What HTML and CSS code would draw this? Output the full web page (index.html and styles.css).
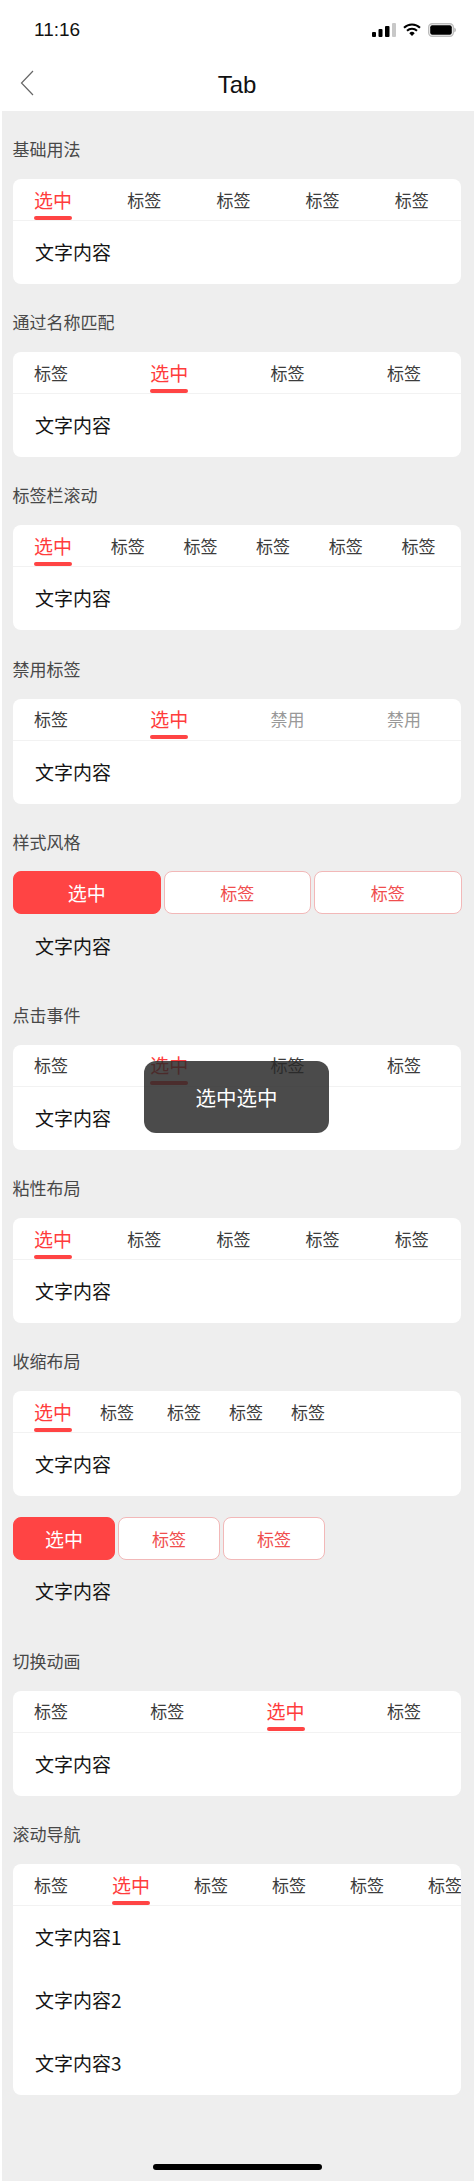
FILE: index.html
```html
<!DOCTYPE html>
<html lang="zh">
<head>
<meta charset="utf-8">
<title>Tab</title>
<link rel="stylesheet" href="styles.css">
</head>
<body>
<div class="page">
  <header class="top">
    <div class="status">
      <span class="time">11:16</span>
      <span class="status-icons">
        <svg class="signal" viewBox="0 0 24 14" width="24" height="14"><rect x="0" y="9" width="4" height="5" rx="1" fill="#000"/><rect x="6.500" y="6" width="4" height="8" rx="1" fill="#000"/><rect x="13" y="3" width="4.500" height="11" rx="1" fill="#000"/><rect x="20" y="0" width="4" height="14" rx="1" fill="#c8c8c8"/></svg>
        <svg class="wifi" viewBox="0 0 18 13" width="18" height="13"><path d="M1 4.700a11.500 11.500 0 0 1 16 0" fill="none" stroke="#000" stroke-width="2"/><path d="M4 7.800a7.200 7.200 0 0 1 10 0" fill="none" stroke="#000" stroke-width="2"/><path d="M9 13 6.300 10.200a3.800 3.800 0 0 1 5.400 0z" fill="#000"/></svg>
        <svg class="battery" viewBox="0 0 28 14" width="28" height="14"><rect x="0.700" y="0.700" width="24.600" height="12.600" rx="3.500" fill="none" stroke="#bdbdbd" stroke-width="1.400"/><rect x="2.200" y="2.200" width="21.600" height="9.600" rx="2" fill="#000"/><path d="M26.200 4.600c1.100.4 1.800 1.300 1.800 2.400s-.7 2-1.800 2.400z" fill="#bdbdbd"/></svg>
      </span>
    </div>
    <div class="nav">
      <svg class="back" viewBox="0 0 14 26" width="14" height="26"><path d="M13 1 1.500 13 13 25" fill="none" stroke="#666" stroke-width="1.200"/></svg>
      <span class="nav-title">Tab</span>
    </div>
  </header>

  <section class="block">
    <h2 class="heading">基础用法</h2>
    <div class="card">
      <div class="tabs tabs-basic"><span class="tab on">选中</span><span class="tab">标签</span><span class="tab">标签</span><span class="tab">标签</span><span class="tab">标签</span></div>
      <p class="body">文字内容</p>
    </div>
  </section>

  <section class="block">
    <h2 class="heading">通过名称匹配</h2>
    <div class="card">
      <div class="tabs tabs-four"><span class="tab">标签</span><span class="tab on">选中</span><span class="tab">标签</span><span class="tab">标签</span></div>
      <p class="body">文字内容</p>
    </div>
  </section>

  <section class="block">
    <h2 class="heading">标签栏滚动</h2>
    <div class="card">
      <div class="tabs tabs-scroll"><span class="tab on">选中</span><span class="tab">标签</span><span class="tab">标签</span><span class="tab">标签</span><span class="tab">标签</span><span class="tab">标签</span></div>
      <p class="body">文字内容</p>
    </div>
  </section>

  <section class="block">
    <h2 class="heading">禁用标签</h2>
    <div class="card">
      <div class="tabs tabs-four"><span class="tab">标签</span><span class="tab on">选中</span><span class="tab off">禁用</span><span class="tab off">禁用</span></div>
      <p class="body">文字内容</p>
    </div>
  </section>

  <section class="block">
    <h2 class="heading">样式风格</h2>
    <div class="pills pills-full"><span class="pill on">选中</span><span class="pill">标签</span><span class="pill">标签</span></div>
    <p class="body body-bare">文字内容</p>
  </section>

  <section class="block">
    <h2 class="heading">点击事件</h2>
    <div class="card">
      <div class="tabs tabs-four"><span class="tab">标签</span><span class="tab on">选中</span><span class="tab">标签</span><span class="tab">标签</span></div>
      <p class="body">文字内容</p>
      <div class="toast">选中选中</div>
    </div>
  </section>

  <section class="block">
    <h2 class="heading">粘性布局</h2>
    <div class="card">
      <div class="tabs tabs-basic"><span class="tab on">选中</span><span class="tab">标签</span><span class="tab">标签</span><span class="tab">标签</span><span class="tab">标签</span></div>
      <p class="body">文字内容</p>
    </div>
  </section>

  <section class="block block-shrink">
    <h2 class="heading">收缩布局</h2>
    <div class="card">
      <div class="tabs tabs-shrink"><span class="tab on">选中</span><span class="tab">标签</span><span class="tab">标签</span><span class="tab">标签</span><span class="tab">标签</span></div>
      <p class="body">文字内容</p>
    </div>
    <div class="pills pills-shrink"><span class="pill on">选中</span><span class="pill">标签</span><span class="pill">标签</span></div>
    <p class="body body-bare">文字内容</p>
  </section>

  <section class="block">
    <h2 class="heading">切换动画</h2>
    <div class="card">
      <div class="tabs tabs-four"><span class="tab">标签</span><span class="tab">标签</span><span class="tab on">选中</span><span class="tab">标签</span></div>
      <p class="body">文字内容</p>
    </div>
  </section>

  <section class="block">
    <h2 class="heading">滚动导航</h2>
    <div class="card">
      <div class="tabs tabs-nav"><span class="tab">标签</span><span class="tab on">选中</span><span class="tab">标签</span><span class="tab">标签</span><span class="tab">标签</span><span class="tab">标签</span></div>
      <p class="body">文字内容1</p>
      <p class="body">文字内容2</p>
      <p class="body">文字内容3</p>
    </div>
  </section>

  <div class="home-bar"></div>
</div>
</body>
</html>
```
FILE: styles.css
```css
* { box-sizing: border-box; }
html, body { margin: 0; padding: 0; }
body {
  width: 474px;
  height: 2181px;
  overflow: hidden;
  background: #fff;
  font-family: "Noto Sans CJK SC", "Liberation Sans", sans-serif;
}
.page {
  height: 2181px;
  margin-left: 2px;
  background: #eeeeee;
  position: relative;
}
.top { margin-left: -2px; background: #fff; height: 111px; }
.status { height: 59px; display: flex; justify-content: space-between; align-items: center; padding: 0 18px 0 34px; }
.time { font-family: "Liberation Sans", sans-serif; font-size: 19px; color: #111; }
.status-icons { display: flex; align-items: center; gap: 7px; }
.nav { height: 52px; display: flex; align-items: center; justify-content: center; position: relative; }
.back { position: absolute; left: 20px; top: 11px; }
.nav-title { font-family: "Liberation Sans", sans-serif; font-size: 24px; color: #111; }
.block { height: 173.200px; padding-top: 22px; }
.block-shrink { height: 299.500px; }
.heading { margin: 0 0 15px 10.500px; font-size: 17px; line-height: 31px; font-weight: 400; color: #484848; }
.card { position: relative; width: 448px; margin-left: 11px; background: #fff; border-radius: 8px; overflow: hidden; }
.tabs { height: 42px; display: flex; align-items: center; padding-left: 21px; border-bottom: 1px solid #f2f2f2; white-space: nowrap; overflow: hidden; }
.tab { flex: none; font-size: 17px; color: #3c3c3c; position: relative; line-height: 42px; }
.tab.on { font-size: 19px; color: #ff3c3c; }
.tab.on::after { content: ""; position: absolute; left: 0; right: 0; bottom: 1px; height: 4px; border-radius: 2px; background: #ff4444; }
.tab.off { color: #999; }
.tabs-basic { gap: 55.200px; }
.tabs-four { gap: 82.300px; }
.tabs-scroll { gap: 38.700px; }
.tabs-shrink { gap: 28px; }
.tabs-shrink .tab:nth-child(3) { margin-left: 5px; }
.tabs-nav { gap: 44px; }
.body { margin: 0; padding: 0 0 0 22px; height: 63px; line-height: 62px; font-size: 19px; color: #141414; }
.body-bare { padding-left: 33px; }
.pills { display: flex; gap: 3px; margin-left: 11px; }
.pill { height: 43px; border: 1px solid #f2b8b8; border-radius: 8px; background: #fff; display: flex; align-items: center; justify-content: center; font-size: 17px; color: #f04e4e; }
.pill.on { background: #ff4444; border-color: #ff4444; color: #fff; font-size: 19px; }
.pills-full { margin-top: -0.800px; margin-bottom: 0.800px; }
.pills-full .pill { width: 147.500px; }
.pills-shrink { margin-top: 20.600px; margin-bottom: 0.400px; }
.pills-shrink .pill { width: 102px; }
.toast { position: absolute; left: 131px; top: 16px; width: 185px; height: 72px; border-radius: 12px; background: rgba(40,40,40,.84); color: #fff; font-size: 20.500px; display: flex; align-items: center; justify-content: center; }
.home-bar { position: absolute; left: 151px; top: 2164px; width: 169px; height: 6px; border-radius: 3px; background: #000; }
```
